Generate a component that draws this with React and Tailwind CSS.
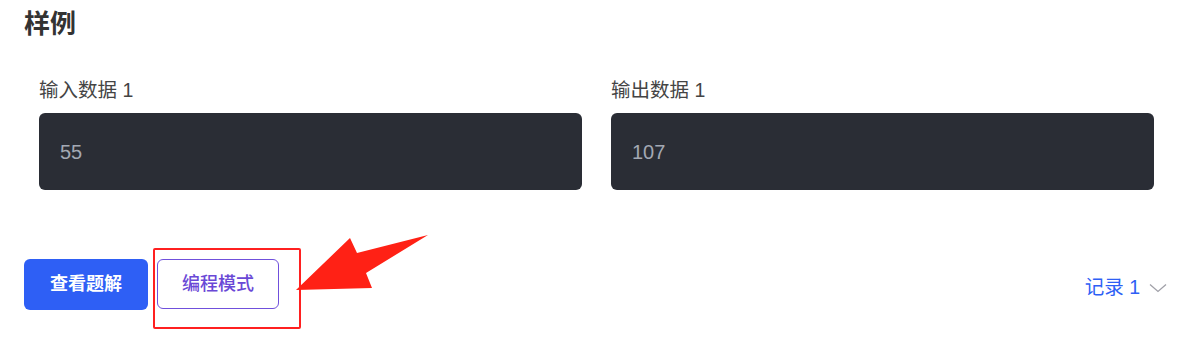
export default function App() {
  const font = { fontFamily: '"Liberation Sans", "Noto Sans CJK SC", sans-serif' };
  return (
    <div className="relative w-[1194px] h-[348px] bg-white overflow-hidden" style={font}>
      <div className="pl-6 pt-[6px] h-[42px]">
        <h3 className="text-[26px] leading-[36px] font-bold text-[#333333]">样例</h3>
      </div>
      <div className="grid grid-cols-2 gap-[29px] pl-[39px] pr-[40px] mt-[36px]">
        {[
          ["输入数据 1", "55"],
          ["输出数据 1", "107"],
        ].map(([label, value]) => (
          <div key={label}>
            <div className="h-6 leading-6 text-[19.5px] text-[#444444]">{label}</div>
            <div className="mt-[11px] h-[77px] rounded-md bg-[#2a2d35] px-[21px] flex items-center">
              <span className="text-[20px] text-[#a3a8b3]">{value}</span>
            </div>
          </div>
        ))}
      </div>
      <div className="flex items-center justify-between pl-6 pr-[27px] mt-[69px]">
        <div className="flex items-start">
          <button className="w-[124px] h-[51px] rounded-md bg-[#2e5ff5] text-white text-[18px] font-bold">
            查看题解
          </button>
          <button className="ml-[9px] w-[122px] h-[50px] rounded-md border border-[#7050dc] bg-white text-[#6a48d6] text-[18px] font-medium">
            编程模式
          </button>
        </div>
        <div className="flex items-center gap-[9px] mt-[6px] text-[#2e5ff5] text-[19.5px]">
          <span>记录 1</span>
          <svg width="18" height="10" viewBox="0 0 18 10" fill="none">
            <path d="M1 1.5L9 8.5L17 1.5" stroke="#a0a0a8" strokeWidth="1.3" />
          </svg>
        </div>
      </div>
      <div className="absolute left-[153px] top-[248px] w-[148px] h-[81px] border-2 border-[#ff2020] rounded-[2px] pointer-events-none" />
      <svg className="absolute left-0 top-0 pointer-events-none" width="1194" height="348">
        <polygon points="296,290 350,238 357,253 428,235 366,273 372,288" fill="#ff2115" />
      </svg>
    </div>
  );
}
